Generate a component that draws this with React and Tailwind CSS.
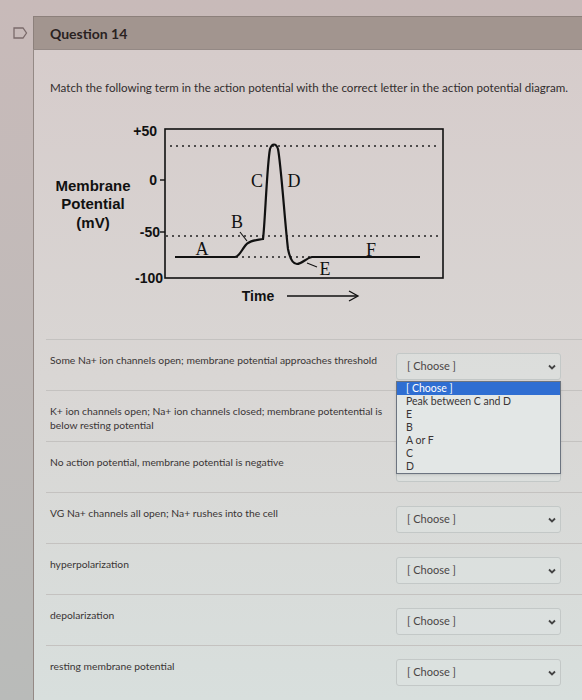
import React from "react";

const rows = [
  "Some Na+ ion channels open; membrane potential approaches threshold",
  "K+ ion channels open; Na+ ion channels closed; membrane potentential is below resting potential",
  "No action potential, membrane potential is negative",
  "VG Na+ channels all open; Na+ rushes into the cell",
  "hyperpolarization",
  "depolarization",
  "resting membrane potential",
];

const options = ["[ Choose ]", "Peak between C and D", "E", "B", "A or F", "C", "D"];

function Chevron() {
  return (
    <svg width="8" height="6" viewBox="0 0 8 6">
      <path d="M1 1.5 L4 4.5 L7 1.5" fill="none" stroke="#444" strokeWidth="1.8" />
    </svg>
  );
}

// selects hidden under the open list keep their frame but not the label
function Select({ covered }) {
  return (
    <div className="w-[165px] h-[27px] shrink-0 rounded-[3px] border border-[#c3c8c7] bg-[#dde2e1]/60 flex items-center justify-between pl-[10px] pr-[4px]">
      {!covered && <span className="text-[11px] text-[#4a4646]">[ Choose ]</span>}
      <span className="ml-auto">
        <Chevron />
      </span>
    </div>
  );
}

function Chart() {
  const label = "font-['Liberation_Sans',Arial,sans-serif] font-bold text-[14px] fill-[#111]";
  const axis = "font-['Liberation_Sans',Arial,sans-serif] font-bold text-[15px] fill-[#111]";
  const letter = "font-['Liberation_Serif','Times_New_Roman',serif] text-[18px] fill-[#111]";
  return (
    <svg width="532" height="200" viewBox="50 120 532 200" className="block">
      <text x="93" y="197" textAnchor="middle" className={axis}>Membrane</text>
      <text x="93" y="215" textAnchor="middle" className={axis}>Potential</text>
      <text x="93" y="234" textAnchor="middle" className={axis}>(mV)</text>

      <text x="157" y="142" textAnchor="end" className={label}>+50</text>
      <text x="157" y="191" textAnchor="end" className={label}>0</text>
      <text x="160" y="243" textAnchor="end" className={label}>-50</text>
      <text x="163" y="289" textAnchor="end" className={label}>-100</text>

      <rect x="165" y="135" width="278" height="149" fill="none" stroke="#111" strokeWidth="1.6" />
      <line x1="160" y1="186" x2="165" y2="186" stroke="#111" strokeWidth="1.4" />
      <line x1="160" y1="238" x2="165" y2="238" stroke="#111" strokeWidth="1.4" />

      <line x1="170" y1="152" x2="440" y2="152" stroke="#222" strokeWidth="1.3" strokeDasharray="2 4" />
      <line x1="166" y1="242" x2="440" y2="242" stroke="#222" strokeWidth="1.3" strokeDasharray="2 4" />
      <line x1="236" y1="263" x2="312" y2="263" stroke="#222" strokeWidth="1.3" strokeDasharray="2 4" />

      <path
        d="M175 263 L235 263 C240 263 243 252 248 249 C252 246 258 246 263 245 C265 230 267 170 270 155 C272 149 276 149 278 155 C281 170 285 230 288 255 C290 265 293 270 297 270 C302 270 306 264 312 263 L420 263"
        fill="none"
        stroke="#111"
        strokeWidth="2.2"
      />

      <text x="202" y="261" textAnchor="middle" className={letter}>A</text>
      <text x="237" y="234" textAnchor="middle" className={letter}>B</text>
      <line x1="240" y1="238" x2="247" y2="247" stroke="#111" strokeWidth="1.1" />
      <text x="257" y="193" textAnchor="middle" className={letter}>C</text>
      <text x="294" y="193" textAnchor="middle" className={letter}>D</text>
      <text x="325" y="281" textAnchor="middle" className={letter}>E</text>
      <line x1="307" y1="269" x2="317" y2="273" stroke="#111" strokeWidth="1.1" />
      <text x="371" y="262" textAnchor="middle" className={letter}>F</text>

      <text x="258" y="307" textAnchor="middle" className={label}>Time</text>
      <line x1="287" y1="302" x2="357" y2="302" stroke="#111" strokeWidth="1.3" />
      <path d="M349 297 L358 302 L349 307" fill="none" stroke="#111" strokeWidth="1.3" />
    </svg>
  );
}

export default function App() {
  return (
    <div className="w-[582px] h-[700px] overflow-hidden flex bg-gradient-to-b from-[#c8bab9] to-[#b9bbb9] text-[#3a3535] font-['Lato','Liberation_Sans',sans-serif]">
      {/* flag */}
      <div className="w-[33px] shrink-0 pt-[27px] pl-[13px]">
        <svg width="15" height="12" viewBox="0 0 15 12">
          <path d="M1 1 H10 L13.5 6 L10 11 H1 Z" fill="none" stroke="#7b6b6b" strokeWidth="1.3" />
        </svg>
      </div>

      <div className="flex-1 mt-[16px] flex flex-col">
        <div className="h-[33px] shrink-0 bg-[#a2958f] border-l border-t border-[#8c807b] flex items-center pl-[16px]">
          <h2 className="text-[14px] font-bold text-[#2a2222]">Question 14</h2>
        </div>

        <div className="flex-1 border-l border-t border-[#948985] bg-gradient-to-b from-[#d6cccb] via-[#d9d6d4] to-[#d8dfdd] pl-[16px]">
          <p className="pt-[31px] text-[11.6px] leading-[13px] text-[#332e2e] whitespace-nowrap">
            Match the following term in the action potential with the correct letter in the action potential diagram.
          </p>

          <div className="mt-[20px]">
            <Chart />
          </div>

          {/* matching rows */}
          <div className="relative mt-[25px] -ml-[4px]">
            {rows.map((text, i) => (
              <div key={i} className="h-[51px] border-t border-[#c4c2c0] flex items-start pl-[4px] pr-[21px]">
                <p className="flex-1 pt-[13px] pr-[2px] text-[10.3px] leading-[14px]">{text}</p>
                <div className="pt-[13px]">
                  <Select covered={i === 1 || i === 2} />
                </div>
              </div>
            ))}

            {/* open dropdown list */}
            <div className="absolute left-[350px] top-[42px] w-[165px] border border-[#6c7480] bg-[#e3e7e6] shadow-sm">
              {options.map((o, i) => (
                <div
                  key={o}
                  className={
                    i === 0
                      ? "h-[13px] leading-[13px] pl-[9px] text-[10.5px] bg-[#2f6ed2] text-white"
                      : "h-[13px] leading-[13px] pl-[9px] text-[10.5px] text-[#3a3535]"
                  }
                >
                  {o}
                </div>
              ))}
            </div>
          </div>
        </div>
      </div>
    </div>
  );
}
